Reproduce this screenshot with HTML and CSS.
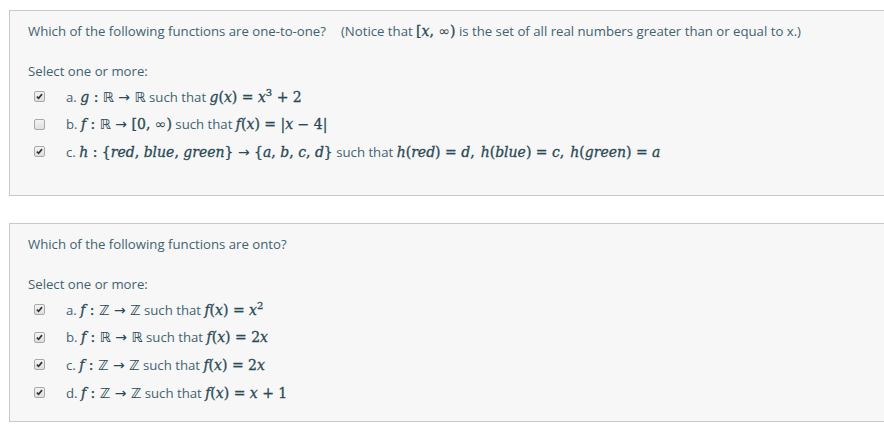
FILE: index.html
```html
<!DOCTYPE html>
<html>
<head>
<meta charset="utf-8">
<link rel="stylesheet" href="styles.css">
</head>
<body>
<div class="page">
  <div class="card card-one">
    <div class="qtext">Which of the following functions are one-to-one?<span class="note">(Notice that <span class="m">[<i>x</i>, <span class="s">∞</span>)</span> is the set of all real numbers greater than or equal to x.)</span></div>
    <div class="prompt">Select one or more:</div>
    <div class="answers">
      <div class="opt"><span class="cb on"><svg viewBox="0 0 11 11"><path d="M2.3 5.6 L4.4 7.8 L8.6 2.6" /></svg></span><span class="lbl">a. <span class="m"><i>g</i> : <span class="s">ℝ</span> <span class="s">→</span> <span class="s">ℝ</span></span> such that <span class="m"><i>g</i>(<i>x</i>) = <i>x</i><sup>3</sup> + 2</span></span></div>
      <div class="opt"><span class="cb"></span><span class="lbl">b. <span class="m"><i>f</i> : <span class="s">ℝ</span> <span class="s">→</span> [0, <span class="s">∞</span>)</span> such that <span class="m"><i>f</i>(<i>x</i>) = |<i>x</i> − 4|</span></span></div>
      <div class="opt"><span class="cb on"><svg viewBox="0 0 11 11"><path d="M2.3 5.6 L4.4 7.8 L8.6 2.6" /></svg></span><span class="lbl">c. <span class="m"><i>h</i> : {<i>red</i>, <i>blue</i>, <i>green</i>} <span class="s">→</span> {<i>a</i>, <i>b</i>, <i>c</i>, <i>d</i>}</span> such that <span class="m"><i>h</i>(<i>red</i>) = <i>d</i>,<span class="sp"></span><i>h</i>(<i>blue</i>) = <i>c</i>,<span class="sp"></span><i>h</i>(<i>green</i>) = <i>a</i></span></span></div>
    </div>
  </div>
  <div class="card card-two">
    <div class="qtext">Which of the following functions are onto?</div>
    <div class="prompt">Select one or more:</div>
    <div class="answers">
      <div class="opt"><span class="cb on"><svg viewBox="0 0 11 11"><path d="M2.3 5.6 L4.4 7.8 L8.6 2.6" /></svg></span><span class="lbl">a. <span class="m"><i>f</i> : <span class="s">ℤ</span> <span class="s">→</span> <span class="s">ℤ</span></span> such that <span class="m"><i>f</i>(<i>x</i>) = <i>x</i><sup>2</sup></span></span></div>
      <div class="opt"><span class="cb on"><svg viewBox="0 0 11 11"><path d="M2.3 5.6 L4.4 7.8 L8.6 2.6" /></svg></span><span class="lbl">b. <span class="m"><i>f</i> : <span class="s">ℝ</span> <span class="s">→</span> <span class="s">ℝ</span></span> such that <span class="m"><i>f</i>(<i>x</i>) = 2<i>x</i></span></span></div>
      <div class="opt"><span class="cb on"><svg viewBox="0 0 11 11"><path d="M2.3 5.6 L4.4 7.8 L8.6 2.6" /></svg></span><span class="lbl">c. <span class="m"><i>f</i> : <span class="s">ℤ</span> <span class="s">→</span> <span class="s">ℤ</span></span> such that <span class="m"><i>f</i>(<i>x</i>) = 2<i>x</i></span></span></div>
      <div class="opt"><span class="cb on"><svg viewBox="0 0 11 11"><path d="M2.3 5.6 L4.4 7.8 L8.6 2.6" /></svg></span><span class="lbl">d. <span class="m"><i>f</i> : <span class="s">ℤ</span> <span class="s">→</span> <span class="s">ℤ</span></span> such that <span class="m"><i>f</i>(<i>x</i>) = <i>x</i> + 1</span></span></div>
    </div>
  </div>
</div>
</body>
</html>
```
FILE: styles.css
```css
html, body {
  margin: 0;
  padding: 0;
  background: #ffffff;
}
.page {
  padding: 10px 0 0 9px;
  overflow: hidden;
  width: 884px;
  box-sizing: border-box;
}
.card {
  background: #f7f7f7;
  border: 1px solid #c9c9c9;
  border-right: none;
  padding: 10px 0 0 18px;
  font-family: "Open Sans", "Liberation Sans", sans-serif;
  font-size: 13.2px;
  color: #3f6370;
}
.card-one {
  height: 174px;
}
.card-two {
  margin-top: 27px;
  height: 187px;
}
.qtext {
  line-height: 20px;
  white-space: nowrap;
}
.note {
  margin-left: 15px;
}
.prompt {
  line-height: 20px;
  margin-top: 20px;
}
.answers {
  margin-top: 2px;
}
.opt {
  display: flex;
  align-items: center;
  height: 27.6px;
  white-space: nowrap;
}
.cb {
  box-sizing: border-box;
  width: 11px;
  height: 11px;
  margin-left: 6px;
  margin-right: 21px;
  border: 1px solid #a9a9a9;
  border-radius: 2px;
  background: linear-gradient(#f4f4f4, #dedede);
  display: flex;
}
.cb svg {
  width: 9px;
  height: 9px;
}
.cb path {
  fill: none;
  stroke: #333;
  stroke-width: 2;
}
.lbl {
  line-height: 20px;
}
.m {
  font-family: "DejaVu Serif", serif;
  font-size: 14px;
  font-weight: normal;
  color: #2a4a55;
  -webkit-text-stroke: 0.3px #2a4a55;
}
.m i {
  font-style: italic;
}
.m .s {
  font-family: "DejaVu Sans", sans-serif;
  -webkit-text-stroke: 0;
}
.m sup {
  font-size: 10px;
  line-height: 0;
  vertical-align: 6px;
}
.sp {
  display: inline-block;
  width: 6px;
}
```
